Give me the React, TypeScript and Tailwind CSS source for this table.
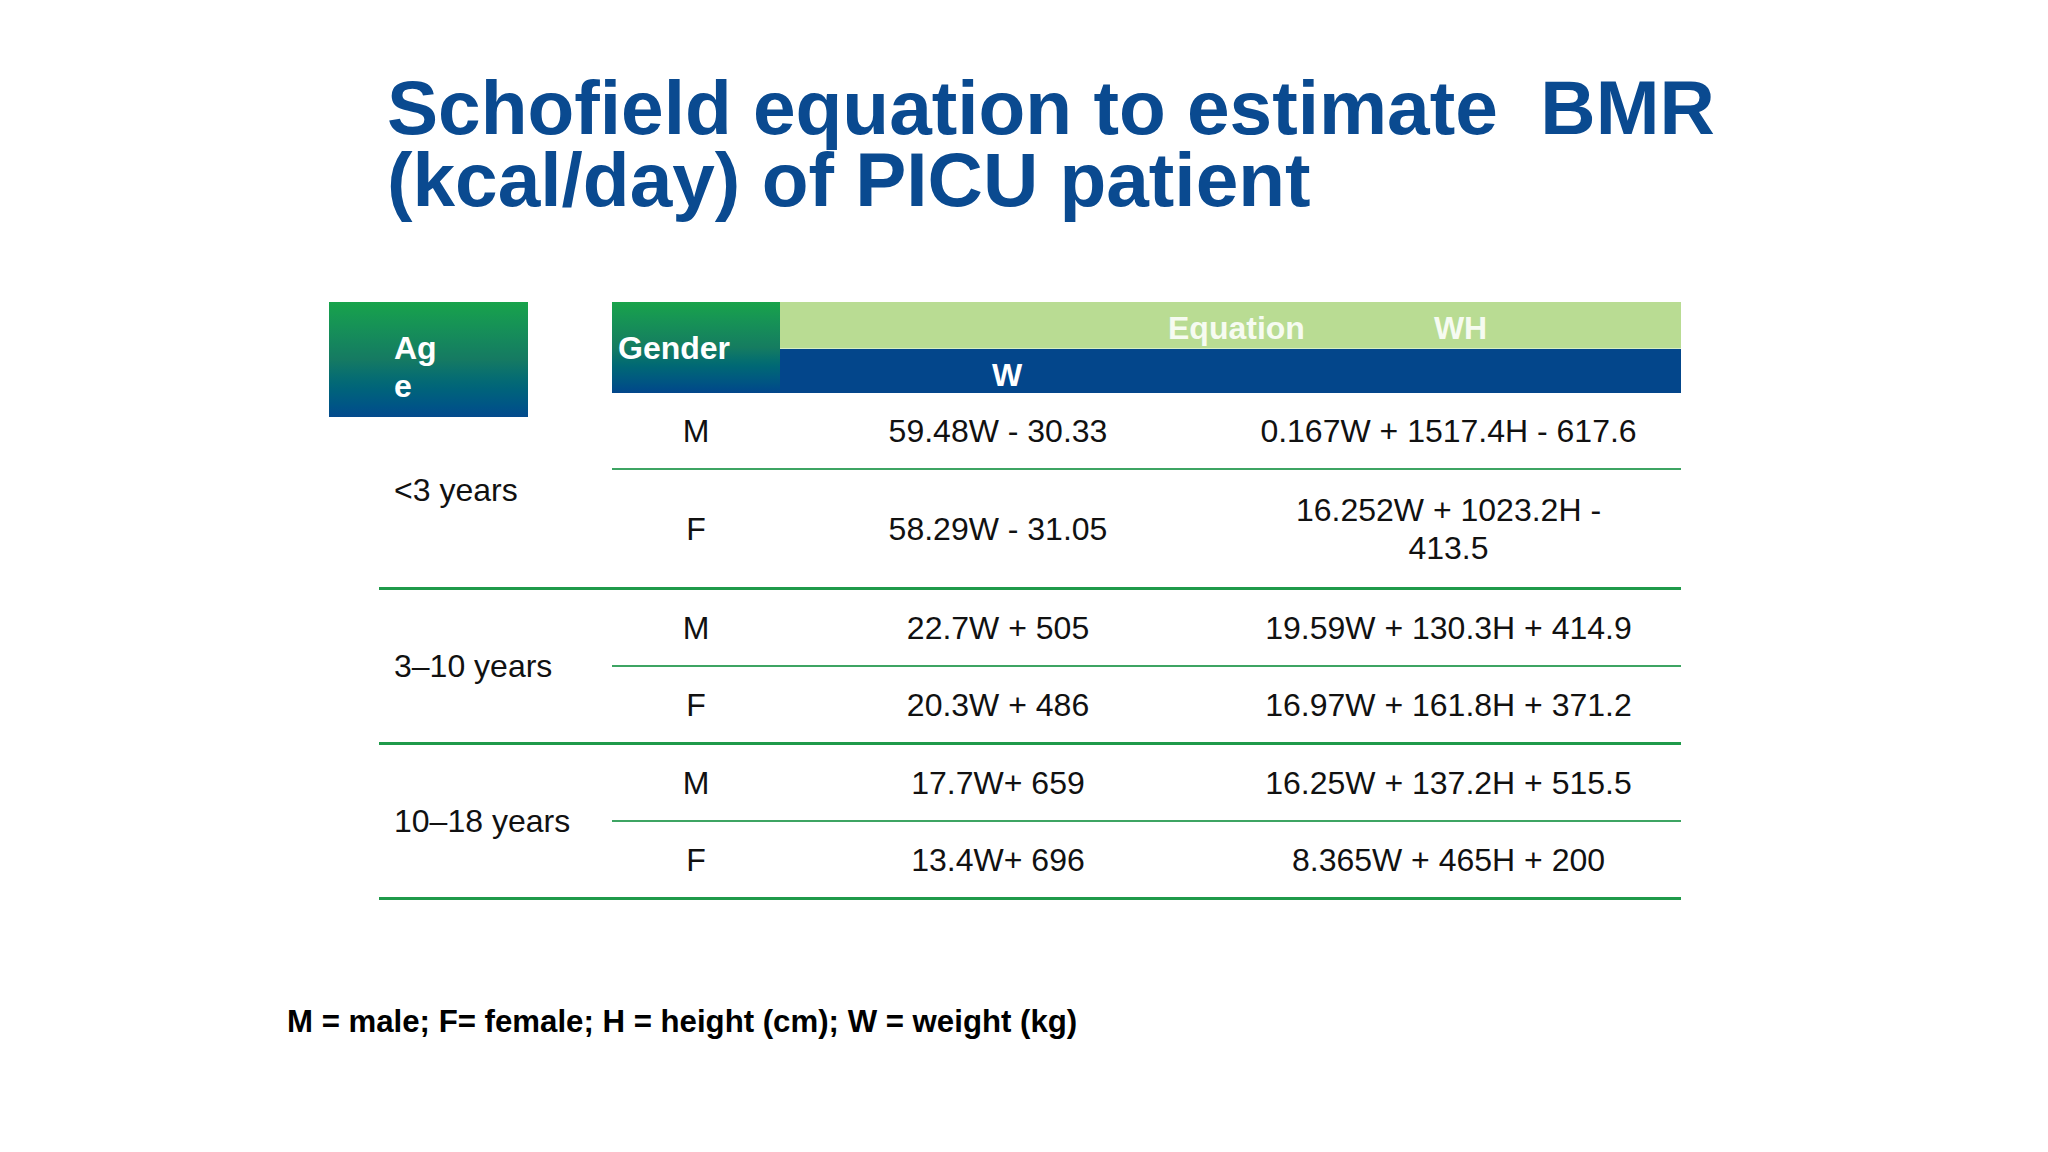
import React from 'react';

type Row = { gender: string; w: React.ReactNode; wh: React.ReactNode; h: string };
type Group = { age: string; rows: Row[] };

const groups: Group[] = [
  {
    age: '<3 years',
    rows: [
      { gender: 'M', w: '59.48W - 30.33', wh: '0.167W + 1517.4H - 617.6', h: 'h-[75px]' },
      {
        gender: 'F',
        w: '58.29W - 31.05',
        wh: (
          <>
            16.252W + 1023.2H -<br />
            413.5
          </>
        ),
        h: 'h-[117px]',
      },
    ],
  },
  {
    age: '3–10 years',
    rows: [
      { gender: 'M', w: '22.7W + 505', wh: '19.59W + 130.3H + 414.9', h: 'h-[75px]' },
      { gender: 'F', w: '20.3W + 486', wh: '16.97W + 161.8H + 371.2', h: 'h-[75px]' },
    ],
  },
  {
    age: '10–18 years',
    rows: [
      { gender: 'M', w: '17.7W+ 659', wh: '16.25W + 137.2H + 515.5', h: 'h-[75px]' },
      { gender: 'F', w: '13.4W+ 696', wh: '8.365W + 465H + 200', h: 'h-[75px]' },
    ],
  },
];

const App: React.FC = () => {
  return (
    <div className="w-[2048px] h-[1152px] bg-white font-['Liberation_Sans',Arial,sans-serif] text-[#111] overflow-hidden">
      <h1 className="pt-[72px] pl-[387px] text-[76.6px] leading-[72px] font-bold text-[#0a4a90] whitespace-pre">
        {'Schofield equation to estimate  BMR\n(kcal/day) of PICU patient'}
      </h1>

      <div className="ml-[329px] mt-[86px] w-[1352px]">
        {/* header */}
        <div className="flex h-[91px] items-start">
          <div className="w-[199px] h-[115px] shrink-0 bg-gradient-to-b from-[#18a34a] via-[#157a62] to-[#044a8d] pl-[65px] pt-[27px] text-[32px] leading-[38px] font-bold text-white">
            Ag
            <br />e
          </div>
          <div className="ml-[84px] flex flex-1 h-[91px] overflow-hidden">
            <div className="w-[168px] h-full shrink-0 bg-gradient-to-b from-[#19a34a] via-[#157c60] to-[#03468b] flex items-center pl-[6px] text-[32px] leading-none font-bold text-white">
              Gender
            </div>
            <div className="flex-1 flex flex-col h-full">
              <div className="h-[47px] shrink-0 bg-[#b9dc93] border-b border-[#d8eec4] flex items-center pt-[5px] pl-[388px] gap-[129px] text-[32px] leading-none font-bold text-[#f6fbf1]">
                <span>Equation</span>
                <span>WH</span>
              </div>
              <div className="flex-1 min-h-0 bg-[#03468b] flex items-center pt-[7px] text-[32px] leading-none font-bold text-white">
                <span className="w-[454px] text-center">W</span>
              </div>
            </div>
          </div>
        </div>

        {/* body */}
        <div className="ml-[50px]">
          {groups.map((g) => (
            <div key={g.age} className="grid grid-cols-[233px_1fr] border-b-[3px] border-[#1f9a4a]">
              <div className="flex items-center pl-[15px] text-[32px]">{g.age}</div>
              <div className="flex flex-col">
                {g.rows.map((r, i) => (
                  <div
                    key={r.gender}
                    className={`grid grid-cols-[168px_436px_1fr] items-center text-center text-[32px] leading-[38px] ${r.h} ${
                      i === 0 ? 'border-b-2 border-[#3ea463] box-content' : ''
                    }`}
                  >
                    <span>{r.gender}</span>
                    <span>{r.w}</span>
                    <span>{r.wh}</span>
                  </div>
                ))}
              </div>
            </div>
          ))}
        </div>
      </div>

      <p className="mt-[104px] pl-[287px] text-[31.2px] leading-[36px] font-bold text-black">
        M = male; F= female; H = height (cm); W = weight (kg)
      </p>
    </div>
  );
};

export default App;
